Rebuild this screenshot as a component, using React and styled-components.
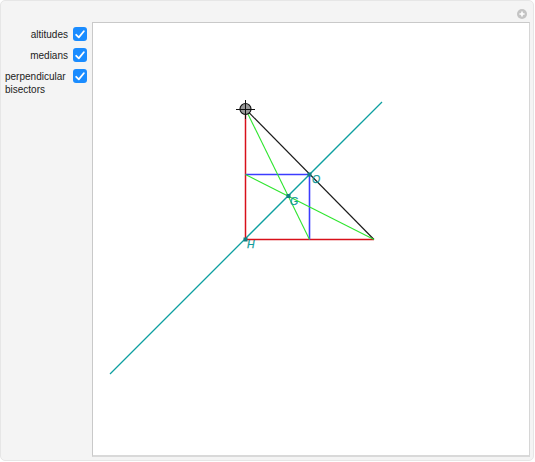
import styled, { createGlobalStyle } from "styled-components";

const GlobalStyle = createGlobalStyle`
  html, body {
    margin: 0;
    padding: 0;
    background: #ffffff;
  }
`;

const controls = [
  { label: "altitudes" },
  { label: "medians" },
  { label: "perpendicular bisectors", wrap: true },
];

export default function App() {
  return (
    <>
      <GlobalStyle />
      <Panel>
        <PlusButton>
          <svg width="10" height="10" viewBox="0 0 10 10">
            <circle cx="5" cy="5" r="5" fill="#c4c4c4" />
            <path d="M5 2.4v5.2M2.4 5h5.2" stroke="#fff" strokeWidth="1.6" />
          </svg>
        </PlusButton>
        <Controls>
          {controls.map((c) => (
            <ControlRow key={c.label}>
              <Label $wrap={c.wrap}>{c.label}</Label>
              <Check>
                <svg width="10" height="9" viewBox="0 0 10 9">
                  <path
                    d="M1.2 4.8 L3.8 7.4 L8.8 1.3"
                    fill="none"
                    stroke="#fff"
                    strokeWidth="1.8"
                    strokeLinecap="round"
                    strokeLinejoin="round"
                  />
                </svg>
              </Check>
            </ControlRow>
          ))}
        </Controls>
        <Plot>
          <svg width="436" height="432" viewBox="0 0 436 432">
            {/* euler line */}
            <line x1="17" y1="351" x2="289" y2="79" stroke="#0e9fa0" strokeWidth="1.3" />
            {/* altitudes */}
            <line x1="152.5" y1="86" x2="152.5" y2="216.5" stroke="#d8101a" strokeWidth="1.5" />
            <line x1="152.5" y1="216.5" x2="281" y2="216.5" stroke="#d8101a" strokeWidth="1.5" />
            {/* hypotenuse */}
            <line x1="152.5" y1="86" x2="281" y2="216.5" stroke="#1a1a1a" strokeWidth="1.1" />
            {/* perpendicular bisectors */}
            <line x1="152.5" y1="151.5" x2="216.5" y2="151.5" stroke="#3c3cff" strokeWidth="1.6" />
            <line x1="216.5" y1="216.5" x2="216.5" y2="151.5" stroke="#3c3cff" strokeWidth="1.6" />
            {/* medians */}
            <line x1="152.5" y1="86" x2="216.5" y2="216.5" stroke="#2ee52e" strokeWidth="1.1" />
            <line x1="281" y1="216.5" x2="152.5" y2="151.5" stroke="#2ee52e" strokeWidth="1.1" />
            {/* points */}
            <rect x="150.5" y="214.5" width="4" height="4" fill="#137f80" />
            <rect x="214.5" y="149.5" width="4" height="4" fill="#137f80" />
            <rect x="193.5" y="171" width="4" height="4" fill="#137f80" />
            <PointLabel x="219" y="160">O</PointLabel>
            <PointLabel x="197" y="182">G</PointLabel>
            <PointLabel x="154" y="225">H</PointLabel>
            {/* locator */}
            <circle cx="152.5" cy="86" r="5.5" fill="#9a9a9a" stroke="#111" strokeWidth="1.2" />
            <line x1="143" y1="86.5" x2="162" y2="86.5" stroke="#111" strokeWidth="1" />
            <line x1="152.5" y1="77" x2="152.5" y2="96" stroke="#111" strokeWidth="1" />
          </svg>
        </Plot>
      </Panel>
    </>
  );
}

const Panel = styled.div`
  position: relative;
  box-sizing: border-box;
  width: 534px;
  height: 461px;
  background: #f4f4f4;
  border: 1px solid #e6e6e6;
  border-radius: 5px;
  display: flex;
  flex-direction: row;
  align-items: flex-start;
  padding: 21px 0 0 0;
  font-family: "Liberation Sans", Arial, sans-serif;
`;

const PlusButton = styled.div`
  position: absolute;
  top: 8px;
  right: 6px;
  width: 10px;
  height: 10px;
  display: flex;
`;

const Controls = styled.div`
  width: 91px;
  box-sizing: border-box;
  padding: 5px 5px 0 0;
  display: flex;
  flex-direction: column;
  gap: 7px;
`;

const ControlRow = styled.div`
  display: flex;
  align-items: flex-start;
  justify-content: flex-end;
  gap: 5px;
`;

const Label = styled.span`
  font-size: 10px;
  line-height: 13px;
  color: #222;
  text-align: ${(p) => (p.$wrap ? "left" : "right")};
  width: ${(p) => (p.$wrap ? "63px" : "auto")};
  padding-top: 1px;
`;

const Check = styled.span`
  flex: none;
  width: 14px;
  height: 14px;
  border-radius: 3px;
  background: #1a8cff;
  display: flex;
  align-items: center;
  justify-content: center;
`;

const Plot = styled.div`
  width: 436px;
  height: 432px;
  background: #ffffff;
  border: 1px solid #c9c9c9;
  border-right-color: #d6d6d6;
  border-bottom: 2px solid #d9d9d9;
  display: flex;

  svg {
    display: block;
  }
`;

const PointLabel = styled.text`
  font-family: "Liberation Sans", Arial, sans-serif;
  font-style: italic;
  font-size: 10.5px;
  fill: #0f9a9a;
  stroke: #0f9a9a;
  stroke-width: 0.25px;
`;
